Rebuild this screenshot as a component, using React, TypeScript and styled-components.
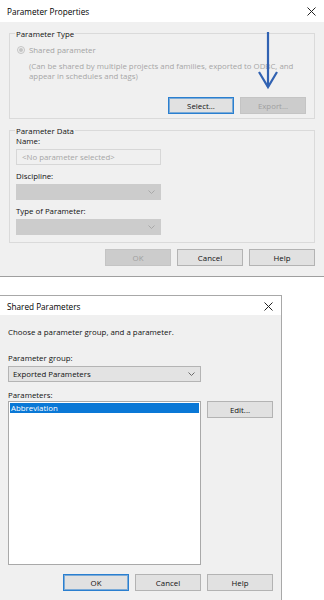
import React from "react";
import styled, { createGlobalStyle } from "styled-components";

const GlobalStyle = createGlobalStyle`
  html, body {
    margin: 0;
    padding: 0;
    background: #ffffff;
  }
  body {
    font-family: "Open Sans", "Noto Sans", Arial, sans-serif;
    font-size: 7.85px;
    color: #111;
  }
  * {
    box-sizing: border-box;
  }
`;

const Page = styled.div`
  width: 324px;
  height: 600px;
  overflow: hidden;
  display: flex;
  flex-direction: column;
`;

const Window = styled.section<{ $width?: number }>`
  position: relative;
  flex: none;
  width: ${(p) => (p.$width ? `${p.$width}px` : "100%")};
  background: #f0f0f0;
`;

const TopWindow = styled(Window)`
  border-bottom: 1px solid #9f9f9f;
`;

const BottomWindow = styled(Window)`
  margin-top: 18px;
  flex: 1;
  border-top: 1px solid #a8a8a8;
  border-right: 1px solid #a8a8a8;
`;

const TitleBar = styled.header<{ $h: number }>`
  height: ${(p) => p.$h}px;
  background: #fff;
  display: flex;
  align-items: center;
  justify-content: space-between;
  padding: 1px 8px 0 7px;
  font-size: 8.2px;
  color: #000;
`;

const Body = styled.div<{ $pad: string }>`
  display: flex;
  flex-direction: column;
  padding: ${(p) => p.$pad};
  white-space: nowrap;
`;

const GroupBox = styled.div<{ $mt?: number; $pb?: number }>`
  display: flex;
  flex-direction: column;
  border: 1px solid #dadada;
  padding: 0 8px ${(p) => p.$pb ?? 4}px 6px;
  margin-top: ${(p) => p.$mt ?? 0}px;
`;

const GroupCaption = styled.div`
  align-self: flex-start;
  margin: -5px 0 0 -1px;
  padding: 0 1px;
  line-height: 10px;
  height: 10px;
  background: #f0f0f0;
  color: #111;
`;

const RadioRow = styled.div`
  display: flex;
  align-items: center;
  gap: 4px;
  height: 12px;
  margin-top: 5px;
  margin-left: 1px;
  color: #a3a3a3;
`;

const RadioDot = styled.span`
  width: 8px;
  height: 8px;
  border-radius: 50%;
  border: 1px solid #c4c4c4;
  display: flex;
  align-items: center;
  justify-content: center;
  &::after {
    content: "";
    width: 4px;
    height: 4px;
    border-radius: 50%;
    background: #c4c4c4;
  }
`;

const Note = styled.div`
  margin-top: 5px;
  padding-left: 13px;
  line-height: 10px;
  color: #a6a6a6;
`;

const ButtonRow = styled.div<{ $mt: number }>`
  display: flex;
  justify-content: flex-end;
  gap: 6px;
  margin-top: ${(p) => p.$mt}px;
`;

const Button = styled.div<{ $focused?: boolean; $disabled?: boolean }>`
  width: 66px;
  height: 17px;
  flex: none;
  display: flex;
  align-items: center;
  justify-content: center;
  background: ${(p) => (p.$disabled ? "#cccccc" : "#e1e1e1")};
  border: 1px solid
    ${(p) => (p.$focused ? "#2a7fd0" : p.$disabled ? "#c4c4c4" : "#b3b3b3")};
  box-shadow: ${(p) => (p.$focused ? "inset 0 0 0 1px rgba(42, 127, 208, 0.55)" : "none")};
  color: ${(p) => (p.$disabled ? "#a0a0a0" : "#111")};
`;

const FieldLabel = styled.div<{ $mt?: number; $lh?: number }>`
  margin-top: ${(p) => p.$mt ?? 0}px;
  line-height: ${(p) => p.$lh ?? 12}px;
  color: #111;
`;

const TextInput = styled.div`
  width: 145px;
  height: 16px;
  margin-top: 2px;
  border: 1px solid #d7d7d7;
  background: #f0f0f0;
  color: #a6a6a6;
  padding-left: 5px;
  line-height: 14px;
`;

const Combo = styled.div<{ $w: number; $disabled?: boolean }>`
  width: ${(p) => p.$w}px;
  height: 16px;
  margin-top: 2px;
  display: flex;
  align-items: center;
  justify-content: space-between;
  padding: 0 5px 0 4px;
  border: 1px solid ${(p) => (p.$disabled ? "#cccccc" : "#b4b4b4")};
  background: ${(p) => (p.$disabled ? "#cccccc" : "#e3e3e3")};
  color: #111;
`;

const ListRow = styled.div`
  display: flex;
  align-items: flex-start;
  gap: 6px;
  margin-top: 1px;
`;

const ListBox = styled.div`
  width: 193px;
  height: 164px;
  background: #fff;
  border: 1px solid #a9a9a9;
  padding: 1px;
`;

const ListItem = styled.div<{ $selected?: boolean }>`
  line-height: 10px;
  height: 10px;
  padding-left: 1px;
  background: ${(p) => (p.$selected ? "#0a78d6" : "transparent")};
  color: ${(p) => (p.$selected ? "#fff" : "#111")};
`;

const Annotation = styled.svg`
  position: absolute;
  left: 258px;
  top: 30px;
`;

function CloseIcon() {
  return (
    <svg width="9" height="9" viewBox="0 0 9 9">
      <path d="M0.5 0.5 L8.5 8.5 M8.5 0.5 L0.5 8.5" stroke="#222" strokeWidth="1" fill="none" />
    </svg>
  );
}

function Chevron({ color }: { color: string }) {
  return (
    <svg width="7" height="4" viewBox="0 0 7 4">
      <path d="M0.5 0.5 L3.5 3.5 L6.5 0.5" stroke={color} strokeWidth="1" fill="none" />
    </svg>
  );
}

export default function App() {
  return (
    <Page>
      <GlobalStyle />
      <TopWindow>
        <TitleBar $h={22}>
          <span>Parameter Properties</span>
          <CloseIcon />
        </TitleBar>
        <Body $pad="11px 9px 10px 9px">
          <GroupBox>
            <GroupCaption>Parameter Type</GroupCaption>
            <RadioRow>
              <RadioDot />
              Shared parameter
            </RadioRow>
            <Note>
              (Can be shared by multiple projects and families, exported to ODBC, and
              <br />
              appear in schedules and tags)
            </Note>
            <ButtonRow $mt={16}>
              <Button $focused>Select...</Button>
              <Button $disabled>Export...</Button>
            </ButtonRow>
          </GroupBox>

          <GroupBox $mt={11} $pb={7}>
            <GroupCaption>Parameter Data</GroupCaption>
            <FieldLabel $mt={-1}>Name:</FieldLabel>
            <TextInput>&lt;No parameter selected&gt;</TextInput>
            <FieldLabel $mt={5}>Discipline:</FieldLabel>
            <Combo $w={145} $disabled>
              <span />
              <Chevron color="#a9a9a9" />
            </Combo>
            <FieldLabel $mt={5}>Type of Parameter:</FieldLabel>
            <Combo $w={145} $disabled>
              <span />
              <Chevron color="#a9a9a9" />
            </Combo>
          </GroupBox>

          <ButtonRow $mt={6}>
            <Button $disabled>OK</Button>
            <Button>Cancel</Button>
            <Button>Help</Button>
          </ButtonRow>
        </Body>

        <Annotation width="20" height="60" viewBox="0 0 20 60">
          <path d="M10 2 L10 57" stroke="#3162b2" strokeWidth="2.2" fill="none" />
          <path d="M1 42 L10 57 L19 42" stroke="#3162b2" strokeWidth="2.2" fill="none" />
        </Annotation>
      </TopWindow>

      <BottomWindow $width={282}>
        <TitleBar $h={19}>
          <span>Shared Parameters</span>
          <CloseIcon />
        </TitleBar>
        <Body $pad="11px 8px 0 8px">
          <FieldLabel>Choose a parameter group, and a parameter.</FieldLabel>
          <FieldLabel $mt={14}>Parameter group:</FieldLabel>
          <Combo $w={193}>
            <span>Exported Parameters</span>
            <Chevron color="#6a6a6a" />
          </Combo>
          <FieldLabel $mt={8} $lh={10}>
            Parameters:
          </FieldLabel>
          <ListRow>
            <ListBox>
              <ListItem $selected>Abbreviation</ListItem>
            </ListBox>
            <Button>Edit...</Button>
          </ListRow>
          <ButtonRow $mt={9}>
            <Button $focused>OK</Button>
            <Button>Cancel</Button>
            <Button>Help</Button>
          </ButtonRow>
        </Body>
      </BottomWindow>
    </Page>
  );
}
